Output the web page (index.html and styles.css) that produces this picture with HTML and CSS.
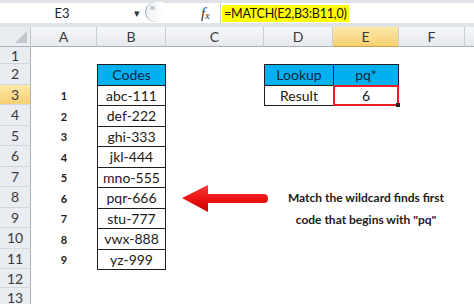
FILE: index.html
```html
<html>
  <head>
    <title>MATCH wildcard</title>
    <link rel="stylesheet" href="styles.css">
  </head>
  <body>
    <div class="app">
      <div class="formula-bar">
        <div class="name-box">
          <span class="name">E3</span>
          <span class="drop">&#9662;</span>
        </div>
        <div class="splitter"><span class="knob"></span></div>
        <div class="fx"><i>f</i><span class="fx-x">x</span></div>
        <div class="formula"><span class="hl">=MATCH(E2,B3:B11,0)</span></div>
      </div>

      <div class="sheet">
        <div class="corner"></div>
        <div class="ch">A</div>
        <div class="ch">B</div>
        <div class="ch">C</div>
        <div class="ch">D</div>
        <div class="ch sel">E</div>
        <div class="ch">F</div>
        <div class="ch last"></div>

        <div class="rh">1</div>

        <div class="rh">2</div>
        <div class="cell col-b tc head">Codes</div>
        <div class="cell col-d tc head left">Lookup</div>
        <div class="cell col-e tc head">pq*</div>

        <div class="rh sel">3</div>
        <div class="cell col-a num">1</div>
        <div class="cell col-b tc">abc-111</div>
        <div class="cell col-d tc left">Result</div>
        <div class="cell col-e tc active">6</div>

        <div class="rh">4</div>
        <div class="cell col-a num">2</div>
        <div class="cell col-b tc">def-222</div>

        <div class="rh">5</div>
        <div class="cell col-a num">3</div>
        <div class="cell col-b tc">ghi-333</div>

        <div class="rh">6</div>
        <div class="cell col-a num">4</div>
        <div class="cell col-b tc">jkl-444</div>

        <div class="rh">7</div>
        <div class="cell col-a num">5</div>
        <div class="cell col-b tc">mno-555</div>

        <div class="rh">8</div>
        <div class="cell col-a num">6</div>
        <div class="cell col-b tc">pqr-666</div>

        <div class="rh">9</div>
        <div class="cell col-a num">7</div>
        <div class="cell col-b tc">stu-777</div>

        <div class="rh">10</div>
        <div class="cell col-a num">8</div>
        <div class="cell col-b tc">vwx-888</div>

        <div class="rh">11</div>
        <div class="cell col-a num">9</div>
        <div class="cell col-b tc">yz-999</div>

        <div class="rh">12</div>
        <div class="rh">13</div>

        <svg class="arrow" width="92" height="34" viewBox="0 0 92 34">
          <defs>
            <linearGradient id="red" x1="0" y1="0" x2="0" y2="1">
              <stop offset="0" stop-color="#ff3b3b"/>
              <stop offset="0.55" stop-color="#e81010"/>
              <stop offset="1" stop-color="#c40000"/>
            </linearGradient>
          </defs>
          <path d="M2 15 L28 2 L28 11 L84 11 Q88 11 88 15.5 Q88 20 84 20 L28 20 L28 29 Z" fill="url(#red)"/>
        </svg>

        <div class="note">Match the wildcard finds first<br>code that begins with "pq"</div>
      </div>
    </div>
  </body>
</html>
```

FILE: styles.css
```css
body {
  margin: 0;
  background: #fff;
  font-family: Lato, "Liberation Sans", sans-serif;
  color: #1a1a1a;
}
.app {
  width: 474px;
  height: 304px;
  overflow: hidden;
}

/* formula bar */
.formula-bar {
  display: flex;
  height: 20px;
  padding: 3px 0 4px 0;
  background: #dfe3e8;
}
.name-box {
  width: 143px;
  background: #fff;
  display: flex;
  align-items: center;
  font-size: 13px;
  color: #222;
}
.name {
  flex: 1;
  text-align: center;
  padding-right: 10px;
}
.drop {
  font-size: 11px;
  color: #333;
  margin-right: 3px;
}
.splitter {
  width: 58px;
  background: #fff;
  position: relative;
}
.knob {
  position: absolute;
  left: 2px;
  top: -1px;
  width: 18px;
  height: 20px;
  border-left: 1px solid #9aa0a8;
  border-radius: 12px 0 0 12px;
  background: linear-gradient(to right, #eef0f2, #fff);
}
.knob::after {
  content: "";
  position: absolute;
  left: 4px;
  top: 4px;
  width: 5px;
  height: 4px;
  border-radius: 3px;
  background: #c5c9ce;
}
.fx {
  width: 19px;
  background: #fff;
  font-family: "Liberation Serif", serif;
  font-size: 15px;
  color: #333;
  display: flex;
  align-items: center;
  border-right: 1px solid #c9ced5;
}
.fx-x {
  font-size: 10px;
  font-style: italic;
  margin-top: 4px;
}
.formula {
  flex: 1;
  background: #fff;
  display: flex;
  align-items: center;
  padding-left: 1px;
}
.hl {
  background: #ffff00;
  font-size: 12.5px;
  letter-spacing: -0.2px;
  padding: 1px 2px;
  line-height: 15px;
  color: #111;
}

/* sheet */
.sheet {
  position: relative;
  display: grid;
  grid-template-columns: 31px 66px 69px 98px 69px 66px 66px 1fr;
  grid-template-rows: 20px 17px repeat(10, 20.5px) 19px 19px;
  font-size: 14px;
}
.corner {
  background: #e9ecf0;
  border-right: 1px solid #c3c8cf;
  border-bottom: 1px solid #a9b0b8;
  position: relative;
}
.corner::after {
  content: "";
  position: absolute;
  right: 3px;
  bottom: 3px;
  border-style: solid;
  border-width: 0 0 12px 12px;
  border-color: transparent transparent #c2c7cd transparent;
}
.ch {
  background: linear-gradient(#f6f7f9, #e6e9ed);
  border-right: 1px solid #c9cdd3;
  border-bottom: 1px solid #a9b0b8;
  text-align: center;
  line-height: 20px;
  color: #3a3a3a;
  font-size: 14px;
}
.ch.last {
  border-right: none;
}
.ch.sel {
  background: linear-gradient(#fde9a9, #f6cf72);
  border-bottom-color: #c9a24a;
}
.rh {
  grid-column: 1;
  background: #e9ecf0;
  border-right: 1px solid #a9b0b8;
  border-bottom: 1px solid #d3d7dc;
  font-size: 14px;
  color: #3a3a3a;
  display: flex;
  align-items: center;
  justify-content: center;
}
.rh.sel {
  background: linear-gradient(#fde9a9, #f6cf72);
}

.cell {
  display: flex;
  align-items: center;
  justify-content: center;
}
.col-a { grid-column: 2; }
.col-b { grid-column: 3; }
.col-d { grid-column: 5; }
.col-e { grid-column: 6; }

.num {
  font-size: 11px;
  font-weight: bold;
  color: #222;
  padding-top: 2px;
}
.tc {
  border: 1px solid #1e1e1e;
  margin-bottom: -1px;
  background: #fff;
}
.tc.left {
  margin-right: -1px;
}
.tc.head {
  background: #00b0f0;
  color: #10253f;
}
.tc.active {
  position: relative;
  border: 2px solid #ee1c25;
  z-index: 1;
}
.tc.active::after {
  content: "";
  position: absolute;
  right: -3px;
  bottom: -3px;
  width: 4px;
  height: 4px;
  background: #222;
}

.arrow {
  position: absolute;
  left: 180px;
  top: 156px;
}
.note {
  position: absolute;
  left: 276px;
  top: 160px;
  width: 180px;
  text-align: center;
  font-size: 12px;
  font-weight: bold;
  line-height: 22px;
  color: #1a1a1a;
}
```
